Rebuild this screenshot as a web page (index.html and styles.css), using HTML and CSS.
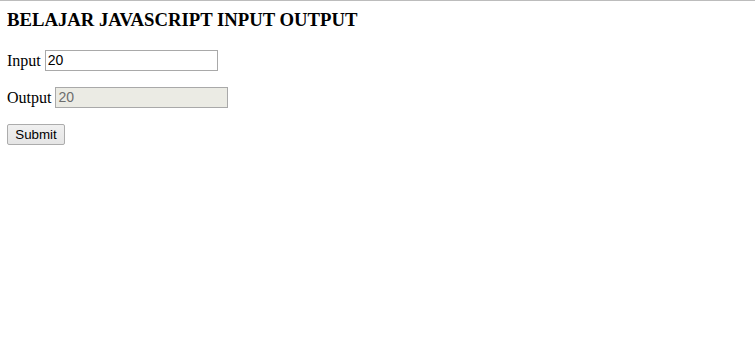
FILE: index.html
```html
<!DOCTYPE html>
<html>
<head>
<meta charset="utf-8">
<title>Belajar JavaScript</title>
<link rel="stylesheet" href="styles.css">
</head>
<body>
<h3 class="title">BELAJAR JAVASCRIPT INPUT OUTPUT</h3>
<p class="row">Input <input class="field" type="text" value="20"></p>
<p class="row">Output <input class="field field-out" type="text" value="20" disabled></p>
<p class="row"><button class="btn" type="button">Submit</button></p>
</body>
</html>
```
FILE: styles.css
```css
html {
  border-top: 1px solid #bcbcbc;
  background: #fff;
}
body {
  margin: 8px 7px;
  font-family: "Liberation Serif", "Times New Roman", serif;
  font-size: 16px;
  color: #000;
}
.title {
  margin: 0 0 19px;
  font-size: 18.72px;
  font-weight: bold;
  line-height: 21.5px;
}
.row {
  margin: 0 0 16px;
  height: 21px;
  line-height: 21px;
}
.field {
  box-sizing: border-box;
  width: 173px;
  height: 21px;
  margin: 0;
  padding: 1px 2px;
  border: 1px solid #a9a9a9;
  font-family: "Liberation Sans", Arial, sans-serif;
  font-size: 14px;
  color: #000;
  background: #fff;
  vertical-align: top;
}
.field-out {
  background: #ebebe4;
  color: #6d6d6d;
}
.btn {
  box-sizing: border-box;
  width: 58px;
  height: 21px;
  margin: 0;
  padding: 0;
  border: 1px solid #acacac;
  border-radius: 2px;
  background: linear-gradient(#f0f0f0, #e5e5e5);
  font-family: "Liberation Sans", Arial, sans-serif;
  font-size: 13.33px;
  color: #000;
  vertical-align: top;
}
```
